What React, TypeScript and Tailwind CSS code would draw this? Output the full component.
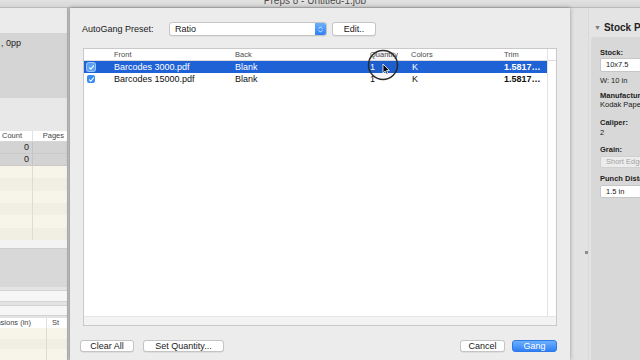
import React from "react";

type FileRow = {
  front: string;
  back: string;
  qty: string;
  colors: string;
  trim: string;
  selected: boolean;
};

const files: FileRow[] = [
  { front: "Barcodes 3000.pdf", back: "Blank", qty: "1", colors: "K", trim: "1.5817…", selected: true },
  { front: "Barcodes 15000.pdf", back: "Blank", qty: "1", colors: "K", trim: "1.5817…", selected: false },
];

const creamRows = [0, 1, 2, 3, 4, 5];
const creamRowsBottom = [0, 1, 2];

function Check({ onBlue }: { onBlue: boolean }) {
  return (
    <span
      className={
        onBlue
          ? "flex h-[8px] w-[8px] items-center justify-center rounded-[2px] bg-[#5aa2f8] ring-1 ring-[#9cc6fb]"
          : "flex h-[8px] w-[8px] items-center justify-center rounded-[2px] bg-[#3a8cf5]"
      }
    >
      <svg viewBox="0 0 8 8" className="h-[7px] w-[7px]">
        <path d="M1.6 4.3 L3.2 5.9 L6.4 2.1" fill="none" stroke="white" strokeWidth="1.2" strokeLinecap="round" strokeLinejoin="round" />
      </svg>
    </span>
  );
}

function MacButton({ label, width, primary }: { label: string; width: string; primary?: boolean }) {
  return (
    <div
      className={
        primary
          ? `flex h-[12px] items-center justify-center rounded-[3px] border border-[#2f7ae6] bg-linear-to-b from-[#6cb0fc] to-[#2f80f6] text-[9px] leading-[12px] text-white ${width}`
          : `flex h-[12px] items-center justify-center rounded-[3px] border border-[#c4c4c4] bg-white text-[9px] leading-[12px] text-[#1a1a1a] shadow-[0_0.5px_0_rgba(0,0,0,0.12)] ${width}`
      }
    >
      {label}
    </div>
  );
}

function LeftPanel() {
  return (
    <div className="flex w-[70px] bg-[#c6c6c6]">
      <div className="flex w-[68px] flex-col border-r border-[#b2b2b2] bg-[#e8e8e8]">
        <div className="h-[25px] bg-[#ebebeb]" />
        <div className="h-[65px] bg-[#d5d5d5] pl-[1px] pt-[5px] text-[9px] leading-[10px] text-[#222]">, 0pp</div>
        <div className="h-[33px] bg-[#e8e8e8]" />
        <div className="flex h-[11px] border-b border-[#d6d6d6] bg-white text-[7.5px] leading-[10px] text-[#444]">
          <div className="w-[33px] border-r border-[#e2e2e2] pr-[10px] text-right">Count</div>
          <div className="flex-1 pr-[3px] text-right">Pages</div>
        </div>
        {[0, 1].map((i) => (
          <div key={i} className="flex h-[12px] border-b border-[#c9c9c9] bg-[#d3d3d3] text-[9px] leading-[11px] text-[#222]">
            <div className="w-[33px] border-r border-[#c4c4c4] pr-[3px] text-right">0</div>
            <div className="flex-1" />
          </div>
        ))}
        <div className="flex h-[74px] flex-col">
          {creamRows.map((i) => (
            <div key={i} className={i % 2 === 0 ? "flex flex-1 bg-[#f7f5ea]" : "flex flex-1 bg-[#f1efe3]"}>
              <div className="w-[33px] border-r border-[#dedbd0]" />
            </div>
          ))}
        </div>
        <div className="h-[9px] border-b border-[#cfcfcf] bg-[#f3f3f3]" />
        <div className="h-[38px] bg-[#d8d8d8]" />
        <div className="h-[3px] bg-[#e4e4e4]" />
        <div className="h-[12px] border-y border-[#d3d3d3] bg-[#f6f6f6]" />
        <div className="h-[3px] bg-[#e3e3e3]" />
        <div className="h-[11px] border-y border-[#d3d3d3] bg-[#f6f6f6]" />
        <div className="h-[2px] bg-[#e3e3e3]" />
        <div className="flex h-[10px] bg-white text-[7.5px] leading-[10px] text-[#444]">
          <div className="flex w-[47px] justify-end overflow-hidden whitespace-nowrap border-r border-[#e0e0e0] pr-[15px]">Dimensions (in)</div>
          <div className="flex-1 pl-[5px]">St</div>
        </div>
        <div className="flex flex-1 flex-col">
          {creamRowsBottom.map((i) => (
            <div key={i} className={i % 2 === 0 ? "flex flex-1 bg-[#f7f5ea]" : "flex flex-1 bg-[#f1efe3]"}>
              <div className="w-[47px] border-r border-[#dedbd0]" />
            </div>
          ))}
        </div>
      </div>
    </div>
  );
}

function RightPanel() {
  return (
    <div className="flex w-[70px]">
      <div className="flex w-[20px] flex-col border-r border-[#d9d9d9] bg-[#e2e2e2]">
        <div className="ml-[15px] mt-[243px] h-[3px] w-[3px] bg-[#8c8c8c]" />
      </div>
      <div className="flex flex-1 flex-col bg-[#e4e4e4]">
        <div className="flex items-center gap-[3px] whitespace-nowrap pl-[5px] pt-[15px] text-[10px] leading-[10px]">
          <span className="text-[7px] text-[#7a7a7a]">▼</span>
          <span className="font-bold text-[#222]">Stock Pr</span>
        </div>
        <div className="ml-[2px] mt-[4px] flex flex-1 flex-col overflow-hidden whitespace-nowrap rounded-tl-[4px] bg-[#d8d8d8] pl-[9px] pt-[11px] text-[7.5px] leading-[9px] text-[#222]">
          <div className="font-bold">Stock:</div>
          <div className="mt-[1px] h-[14px] w-[60px] rounded-[2px] border border-[#c6c6c6] bg-white pl-[5px] text-[7.5px] leading-[12px]">10x7.5</div>
          <div className="mt-[4px]">W: 10 in</div>
          <div className="mt-[6px] font-bold">Manufacturer:</div>
          <div>Kodak Paper</div>
          <div className="mt-[9px] font-bold">Caliper:</div>
          <div className="mt-[1px]">2</div>
          <div className="mt-[8px] font-bold">Grain:</div>
          <div className="mt-[2px] h-[12px] w-[60px] rounded-[2px] border border-[#d0d0d0] bg-[#ececec] pl-[5px] leading-[10px] text-[#a3a3a3]">Short Edge</div>
          <div className="mt-[6px] font-bold">Punch Distance:</div>
          <div className="mt-[2px] h-[13px] w-[60px] rounded-[2px] border border-[#c6c6c6] bg-white pl-[5px] leading-[11px]">1.5 in</div>
        </div>
      </div>
    </div>
  );
}

function FileTable() {
  const cols = "grid grid-cols-[30px_121px_135px_41px_93px_44px]";
  return (
    <div className="ml-[13px] mt-[12px] flex h-[278px] w-[474px] flex-col border border-[#c9c9c9] bg-white">
      <div className="flex flex-1">
        <div className="flex w-[463px] flex-col">
          <div className={`${cols} h-[12px] border-b border-[#dcdcdc] text-[7.5px] leading-[11px] text-[#4a4a4a]`}>
            <div />
            <div>Front</div>
            <div>Back</div>
            <div>Quantity</div>
            <div>Colors</div>
            <div>Trim</div>
          </div>
          {files.map((f) => (
            <div
              key={f.front}
              className={
                f.selected
                  ? `${cols} h-[12px] bg-[#1f62d6] text-[9px] leading-[12px] text-white`
                  : `${cols} h-[12px] bg-white text-[9px] leading-[12px] text-[#111]`
              }
            >
              <div className="flex items-center pl-[3px]">
                <Check onBlue={f.selected} />
              </div>
              <div className="whitespace-nowrap">{f.front}</div>
              <div>{f.back}</div>
              <div>{f.qty}</div>
              <div className="pl-[1px]">{f.colors}</div>
              <div className="whitespace-nowrap font-semibold">{f.trim}</div>
            </div>
          ))}
          <div className="flex-1" />
        </div>
        <div className="flex w-[10px] flex-col border-l border-[#e3e3e3]">
          <div className="h-[12px] border-b border-[#dcdcdc]" />
        </div>
      </div>
      <div className="h-[9px] border-t border-[#e6e6e6] bg-[#f3f3f3]" />
    </div>
  );
}

function GangSheet() {
  return (
    <div className="relative z-10 flex w-[500px] flex-col bg-[#ececec] shadow-[0_0_4px_rgba(0,0,0,0.35)]">
      <div className="mt-[14px] flex h-[14px] items-center pl-[12px]">
        <div className="w-[87px] text-[9px] leading-[12px] text-[#1a1a1a]">AutoGang Preset:</div>
        <div className="flex h-[14px] w-[158px] items-stretch rounded-[3px] border border-[#c6c6c6] bg-white shadow-[0_0.5px_0_rgba(0,0,0,0.1)]">
          <div className="flex-1 pl-[5px] text-[9px] leading-[12px] text-[#1a1a1a]">Ratio</div>
          <div className="flex w-[11px] items-center justify-center rounded-r-[2px] bg-linear-to-b from-[#6cb0fc] to-[#2f80f6]">
            <svg viewBox="0 0 6 10" className="h-[9px] w-[5px]">
              <path d="M1.2 3.6 L3 1.8 L4.8 3.6 M1.2 6.4 L3 8.2 L4.8 6.4" fill="none" stroke="white" strokeWidth="1" strokeLinecap="round" strokeLinejoin="round" />
            </svg>
          </div>
        </div>
        <div className="ml-[5px]">
          <MacButton label="Edit.." width="w-[44px] h-[14px]" />
        </div>
      </div>

      <FileTable />

      <div className="mt-[14px] flex justify-between pl-[10px] pr-[13px]">
        <div className="flex gap-[9px]">
          <MacButton label="Clear All" width="w-[54px]" />
          <MacButton label="Set Quantity..." width="w-[81px]" />
        </div>
        <div className="flex gap-[7px]">
          <MacButton label="Cancel" width="w-[45px]" />
          <MacButton label="Gang" width="w-[45px]" primary />
        </div>
      </div>
    </div>
  );
}

export default function App() {
  return (
    <div className="relative flex h-[360px] w-[640px] flex-col overflow-hidden bg-[#e4e4e4] font-['Liberation_Sans',Arial,sans-serif]">
      <div className="flex h-[8px] justify-center overflow-hidden border-b border-[#bababa] bg-linear-to-b from-[#e2e2e2] to-[#d6d6d6] pr-[10px]">
        <div className="-mt-[4px] whitespace-nowrap text-[10px] leading-[10px] text-[#4d4d4d]">Preps 8 - Untitled-1.job</div>
      </div>
      <div className="flex flex-1">
        <LeftPanel />
        <GangSheet />
        <RightPanel />
      </div>

      {/* pointer highlight over the Quantity cell */}
      <svg className="absolute left-[366px] top-[48px] z-20 h-[34px] w-[34px]" viewBox="0 0 34 34">
        <circle cx="17" cy="17" r="14.5" fill="rgba(0,0,0,0.04)" stroke="#2b2b2b" strokeWidth="1.5" />
        <path
          d="M17 16 L17 25 L19.1 23 L20.6 26.3 L22 25.7 L20.6 22.5 L23.4 22.5 Z"
          fill="#000"
          stroke="#fff"
          strokeWidth="0.8"
          strokeLinejoin="round"
        />
      </svg>
    </div>
  );
}
